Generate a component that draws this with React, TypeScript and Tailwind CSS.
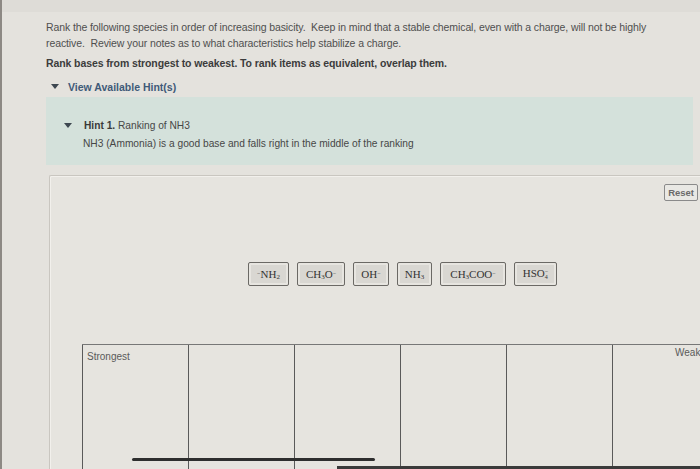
import React from "react";

type Chip = { id: string; w: string; label: React.ReactNode };

const chips: Chip[] = [
  { id: "nh2", w: "w-[41px]", label: (<><sup className="text-[6px]">−</sup>NH<sub className="text-[7px]">2</sub></>) },
  { id: "ch3o", w: "w-[48px]", label: (<>CH<sub className="text-[7px]">3</sub>O<sup className="text-[6px]">−</sup></>) },
  { id: "oh", w: "w-[36px]", label: (<>OH<sup className="text-[6px]">−</sup></>) },
  { id: "nh3", w: "w-[35px]", label: (<>NH<sub className="text-[7px]">3</sub></>) },
  { id: "ch3coo", w: "w-[66px]", label: (<>CH<sub className="text-[7px]">3</sub>COO<sup className="text-[6px]">−</sup></>) },
  { id: "hso4", w: "w-[43px]", label: (<>HSO<span className="inline-flex flex-col text-[6px] leading-[6px] align-middle"><span>−</span><span>4</span></span></>) },
];

function Caret() {
  return (
    <svg width="8" height="6" viewBox="0 0 8 6" className="shrink-0">
      <path d="M0 0 H8 L4 5 Z" fill="#3d4750" />
    </svg>
  );
}

export default function App() {
  return (
    <div
      className="relative w-[700px] h-[469px] overflow-hidden bg-[#e4e2dd] border-l-2 border-[#8d8984] text-[#4f4f4f]"
      style={{ fontFamily: '"Liberation Sans", Arial, sans-serif' }}
    >
      {/* top band */}
      <div className="h-[12px] bg-[#dedcd7]" />

      <div className="pl-[44px]">
        {/* Question text */}
        <div className="mt-[7px] text-[10.5px] leading-[16px] tracking-[-0.1px] pr-[45px]">
          Rank the following species in order of increasing basicity.&nbsp; Keep in mind that a stable chemical, even with a charge, will not be highly
          reactive.&nbsp; Review your notes as to what characteristics help stabilize a charge.
        </div>
        <div className="mt-[4px] text-[10.5px] leading-[16px] font-bold text-[#3c3c3c] tracking-[-0.1px]">
          Rank bases from strongest to weakest. To rank items as equivalent, overlap them.
        </div>

        <div className="mt-[9px] flex items-center gap-[9px] pl-[5px] text-[10.5px] leading-[14px] font-bold text-[#3f5a78]">
          <Caret />
          <span>View Available Hint(s)</span>
        </div>

        {/* Hint box */}
        <div className="mt-[3px] w-[647px] h-[68px] bg-[#d4e1db] pt-[22px] pl-[18px]">
          <div className="flex items-center gap-[12px] text-[10.2px] leading-[14px] text-[#474747]">
            <Caret />
            <span>
              <span className="font-bold text-[#3a3a3a]">Hint 1.</span> Ranking of NH3
            </span>
          </div>
          <div className="mt-[4px] pl-[19px] text-[10.2px] leading-[14px] text-[#474747]">
            NH3 (Ammonia) is a good base and falls right in the middle of the ranking
          </div>
        </div>

        {/* Ranking area */}
        <div className="mt-[10px] ml-[3px] h-[320px] border-t border-l border-[#c9c6c0] rounded-tl-[2px] bg-[#e6e4df] shadow-[inset_1px_1px_0_#f2f0ec]">
          <div className="flex justify-end pt-[8px] pr-[2px]">
            <button
              type="button"
              className="h-[17px] px-[3px] border border-[#8a8a8a] rounded-[2px] bg-[#e9e8e4] text-[9.5px] leading-[15px] font-bold text-[#6a6a6a]"
            >
              Reset
            </button>
          </div>

          {/* Chips */}
          <div className="mt-[61px] flex justify-start gap-[8px] pl-[198px]">
            {chips.map((c) => (
              <div
                key={c.id}
                className={`${c.w} h-[24px] flex items-center justify-center border border-[#6b6965] rounded-[2px] bg-[#d9d7d2] shadow-[inset_0_0_0_2px_#e7e5e0] text-[11px] text-[#333] leading-none`}
                style={{ fontFamily: '"Liberation Serif", "Times New Roman", serif' }}
              >
                <span className="whitespace-nowrap">{c.label}</span>
              </div>
            ))}
          </div>

          {/* Bins */}
          <div className="mt-[58px] ml-[32px] flex h-[130px] border-t border-[#777]">
            {[0, 1, 2, 3, 4, 5].map((i) => (
              <div
                key={i}
                className={`relative shrink-0 h-full border-l border-[#5a5a5a] ${i === 5 ? "w-[110px]" : "w-[106px]"}`}
              >
                {i === 0 && (
                  <span className="absolute left-[4px] top-[4px] text-[10px] text-[#5a5a5a]">Strongest</span>
                )}
                {i === 5 && (
                  <span className="absolute left-[62px] top-[0px] text-[10px] text-[#5a5a5a] whitespace-nowrap">Weakest</span>
                )}
              </div>
            ))}
          </div>
        </div>
      </div>

      {/* dark bar across the bins (photographed object) */}
      <div className="absolute left-[130px] top-[458px] w-[243px] h-[3px] rounded-full bg-[#2e2e2e]" />
      <div className="absolute left-[335px] top-[466px] w-[365px] h-[3px] bg-[#3a3a3a]" />
    </div>
  );
}
